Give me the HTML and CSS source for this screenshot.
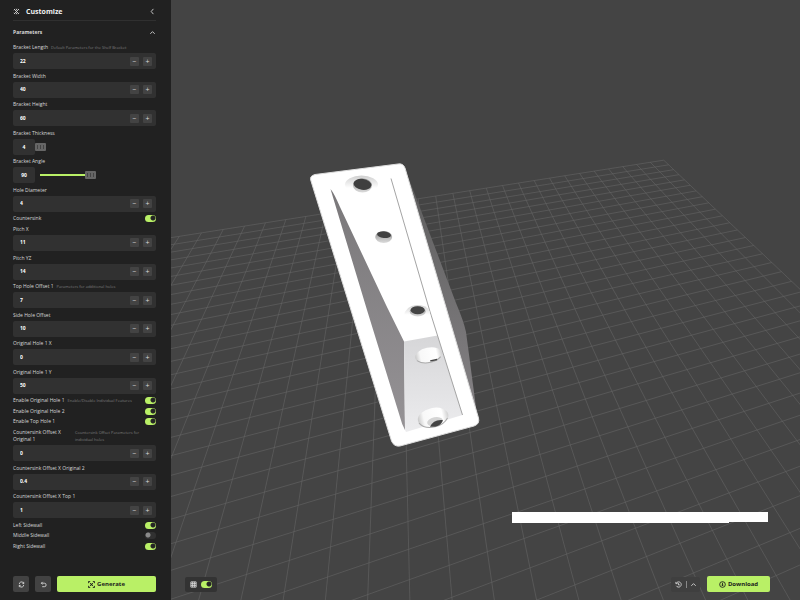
FILE: index.html
```html
<!DOCTYPE html>
<html lang="en">

<head>
    <meta charset="UTF-8" />
    <meta name="viewport" content="width=device-width, initial-scale=1.0" />
    <title>Customize</title>
    <link rel="stylesheet" href="styles.css">
</head>

<body>
    <aside class="sidebar">
        <header class="title-bar">
            <svg class="icon" viewBox="0 0 16 16">
                <path d="M3 3l10 10M13 3L3 13M2 5l3-3M11 2l3 3M2 11l3 3M11 14l3-3M8 2v3M8 11v3" />
            </svg>
            <h1>Customize</h1>
            <button class="plain" aria-label="Collapse panel">
                <svg class="icon" viewBox="0 0 16 16"><path d="M10 2L5 8l5 6" /></svg>
            </button>
        </header>

        <div class="section">
            <h2>Parameters</h2>
            <button class="plain" aria-label="Collapse section">
                <svg class="icon" viewBox="0 0 16 16"><path d="M3 11l5-5 5 5" /></svg>
            </button>
        </div>

        <form class="params" id="params">
            <div class="field">
                <div class="caption"><label for="length">Bracket Length</label><small>Default Parameters for the Shelf Bracket</small></div>
                <div class="number"><input id="length" value="22"><button type="button">−</button><button type="button">+</button></div>
            </div>
            <div class="field">
                <div class="caption"><label for="width">Bracket Width</label></div>
                <div class="number"><input id="width" value="40"><button type="button">−</button><button type="button">+</button></div>
            </div>
            <div class="field">
                <div class="caption"><label for="height">Bracket Height</label></div>
                <div class="number"><input id="height" value="60"><button type="button">−</button><button type="button">+</button></div>
            </div>
            <div class="field">
                <div class="caption"><label for="thickness">Bracket Thickness</label></div>
                <div class="slide">
                    <input class="box" id="thickness" value="4">
                    <input class="range" type="range" min="4" max="20" value="4" style="--fill: 0%" aria-label="Bracket Thickness">
                </div>
            </div>
            <div class="field">
                <div class="caption"><label for="angle">Bracket Angle</label></div>
                <div class="slide">
                    <input class="box" id="angle" value="90">
                    <input class="range" type="range" min="0" max="200" value="90" style="--fill: 45%" aria-label="Bracket Angle">
                </div>
            </div>
            <div class="field">
                <div class="caption"><label for="diameter">Hole Diameter</label></div>
                <div class="number"><input id="diameter" value="4"><button type="button">−</button><button type="button">+</button></div>
            </div>
            <div class="switch">
                <label for="countersink">Countersink</label>
                <input class="toggle" type="checkbox" id="countersink" checked>
            </div>
            <div class="field">
                <div class="caption"><label for="pitch-x">Pitch X</label></div>
                <div class="number"><input id="pitch-x" value="11"><button type="button">−</button><button type="button">+</button></div>
            </div>
            <div class="field">
                <div class="caption"><label for="pitch-yz">Pitch YZ</label></div>
                <div class="number"><input id="pitch-yz" value="14"><button type="button">−</button><button type="button">+</button></div>
            </div>
            <div class="field">
                <div class="caption"><label for="top-offset">Top Hole Offset 1</label><small>Parameters for additional holes</small></div>
                <div class="number"><input id="top-offset" value="7"><button type="button">−</button><button type="button">+</button></div>
            </div>
            <div class="field">
                <div class="caption"><label for="side-offset">Side Hole Offset</label></div>
                <div class="number"><input id="side-offset" value="10"><button type="button">−</button><button type="button">+</button></div>
            </div>
            <div class="field">
                <div class="caption"><label for="hole-x">Original Hole 1 X</label></div>
                <div class="number"><input id="hole-x" value="0"><button type="button">−</button><button type="button">+</button></div>
            </div>
            <div class="field">
                <div class="caption"><label for="hole-y">Original Hole 1 Y</label></div>
                <div class="number"><input id="hole-y" value="50"><button type="button">−</button><button type="button">+</button></div>
            </div>
            <div class="switch">
                <label for="hole-1">Enable Original Hole 1</label><small>Enable/Disable Individual Features</small>
                <input class="toggle" type="checkbox" id="hole-1" checked>
            </div>
            <div class="switch">
                <label for="hole-2">Enable Original Hole 2</label>
                <input class="toggle" type="checkbox" id="hole-2" checked>
            </div>
            <div class="switch">
                <label for="top-hole">Enable Top Hole 1</label>
                <input class="toggle" type="checkbox" id="top-hole" checked>
            </div>
            <div class="field">
                <div class="caption two-line"><label for="cs-1">Countersink Offset X Original 1</label><small>Countersink Offset Parameters for individual holes</small></div>
                <div class="number"><input id="cs-1" value="0"><button type="button">−</button><button type="button">+</button></div>
            </div>
            <div class="field">
                <div class="caption"><label for="cs-2">Countersink Offset X Original 2</label></div>
                <div class="number"><input id="cs-2" value="0.4"><button type="button">−</button><button type="button">+</button></div>
            </div>
            <div class="field">
                <div class="caption"><label for="cs-top">Countersink Offset X Top 1</label></div>
                <div class="number"><input id="cs-top" value="1"><button type="button">−</button><button type="button">+</button></div>
            </div>
            <div class="switch">
                <label for="left">Left Sidewall</label>
                <input class="toggle" type="checkbox" id="left" checked>
            </div>
            <div class="switch">
                <label for="middle">Middle Sidewall</label>
                <input class="toggle" type="checkbox" id="middle">
            </div>
            <div class="switch">
                <label for="right">Right Sidewall</label>
                <input class="toggle" type="checkbox" id="right" checked>
            </div>
        </form>

        <footer class="actions">
            <button class="square" aria-label="Reset">
                <svg class="icon" viewBox="0 0 16 16"><path d="M3 7a5 5 0 0 1 9-3l1 2M13 9a5 5 0 0 1-9 3l-1-2M13 2v4h-3M3 14v-4h3" /></svg>
            </button>
            <button class="square" aria-label="Undo">
                <svg class="icon" viewBox="0 0 16 16"><path d="M6 2L3 5l3 3M3 5h7a4 4 0 0 1 0 8H5" /></svg>
            </button>
            <button class="primary generate">
                <svg class="icon" viewBox="0 0 16 16"><path d="M1 5V1h4M11 1h4v4M15 11v4h-4M5 15H1v-4M4 4l3 3M12 4L9 7M4 12l3-3M12 12L9 9M8 6v4M6 8h4" /></svg>
                Generate
            </button>
        </footer>
    </aside>

    <main class="viewer">
        <svg class="scene" viewBox="171 0 629 600" preserveAspectRatio="xMidYMid slice">
            <defs>
                <linearGradient id="side" x1="0" y1="0" x2="0" y2="1">
                    <stop offset="0" stop-color="#5c5c5c" />
                    <stop offset="1" stop-color="#858285" />
                </linearGradient>
                <linearGradient id="wall" x1="0" y1="0" x2="0" y2="1">
                    <stop offset="0" stop-color="#7a787a" />
                    <stop offset="1" stop-color="#959295" />
                </linearGradient>
                <linearGradient id="floor" x1="0" y1="0" x2="0" y2="1">
                    <stop offset="0" stop-color="#d6d6d8" />
                    <stop offset="1" stop-color="#ececee" />
                </linearGradient>
                <linearGradient id="rim" x1="0" y1="0" x2="0" y2="1">
                    <stop offset="0" stop-color="#8c8c8c" />
                    <stop offset="1" stop-color="#dcdcdc" />
                </linearGradient>
                <linearGradient id="sink" x1="0" y1="0" x2="0" y2="1">
                    <stop offset="0" stop-color="#cfcfcf" />
                    <stop offset="0.7" stop-color="#ffffff" />
                </linearGradient>
                <linearGradient id="bowl" x1="0" y1="0" x2="1" y2="0">
                    <stop offset="0" stop-color="#c8c8c8" />
                    <stop offset="0.2" stop-color="#f8f8f8" />
                    <stop offset="0.8" stop-color="#ffffff" />
                    <stop offset="1" stop-color="#d0d0d0" />
                </linearGradient>
            </defs>

            <path class="grid" id="grid" />

            <!-- bracket body -->
            <path fill="url(#side)" d="M404 167L414 192L456 303Q464 322 466 332L477 415L466 410L400 170Z" />
            <path fill="#fff" stroke="#ddd" stroke-width="1" d="M311 181Q309 176 315 174.500L398 164Q403 163 405 168L478.500 418Q480 424 474 426L400 446Q394 447 391.500 441Z" />
            <path fill="url(#wall)" d="M330.500 189Q334 193 340 207L386.500 306L404 341.500L405 430Q402 425 400 417L367 310Z" />
            <path fill="url(#floor)" d="M404 341.500L437.500 335.500L462.500 415L406 432L405 430Z" />
            <path fill="none" stroke="#a4a4a4" stroke-width="1" d="M391 178.500L429.500 310L462.500 415" />

            <!-- holes -->
            <ellipse cx="361.500" cy="184.500" rx="16.500" ry="9" fill="url(#sink)" />
            <ellipse cx="362.500" cy="185.500" rx="9.500" ry="7" fill="url(#rim)" />
            <ellipse cx="362.500" cy="184.300" rx="9" ry="5.500" fill="#3f3f3f" transform="rotate(8 362 184)" />
            <ellipse cx="383.700" cy="237" rx="8.500" ry="6" fill="url(#rim)" />
            <ellipse cx="384" cy="234.800" rx="7" ry="3.200" fill="#414141" transform="rotate(6 384 235)" />
            <path fill="url(#sink)" d="M404 316Q405 306 417 305Q427 305 429.500 311L431 319Z" />
            <ellipse cx="417.700" cy="311.500" rx="8" ry="5" fill="url(#rim)" />
            <ellipse cx="417.700" cy="310.200" rx="7" ry="4" fill="#444" />
            <g transform="rotate(-12 429 355)">
                <ellipse cx="428.500" cy="355" rx="13.500" ry="7.500" fill="url(#bowl)" />
                <path fill="none" stroke="#aaa" stroke-width="1" d="M416 358Q421 363 429 362.500Q437 362 440 359" />
                <path stroke="#444" stroke-width="1.500" d="M429 361L436 361" />
            </g>
            <g transform="rotate(-12 433 417)">
                <ellipse cx="433" cy="417.500" rx="15.500" ry="9.500" fill="url(#bowl)" />
                <path fill="none" stroke="#aaa" stroke-width="1" d="M418 420Q422 427 433 427Q442 427 447 421" />
                <ellipse cx="434" cy="422" rx="8" ry="4.500" fill="#d4d4d4" />
                <path fill="#444" d="M428 426Q433 419 442 422Q440 427 433 427Z" />
            </g>
        </svg>

        <div class="notice"><span></span></div>

        <div class="view-tools">
            <svg class="icon" viewBox="0 0 16 16"><path d="M2 2h12v12H2zM2 6h12M2 10h12M6 2v12M10 2v12" /></svg>
            <input class="toggle" type="checkbox" aria-label="Show grid" checked>
        </div>

        <div class="export-tools">
            <div class="history">
                <button class="plain" aria-label="History">
                    <svg class="icon" viewBox="0 0 16 16"><path d="M2 2v4h4M3 5a6 6 0 1 1 0 6M8 5v4h3" /></svg>
                </button>
                <button class="plain" aria-label="More versions">
                    <svg class="icon" viewBox="0 0 16 16"><path d="M3 11l5-5 5 5" /></svg>
                </button>
            </div>
            <button class="primary download">
                <svg class="icon" viewBox="0 0 16 16"><circle cx="8" cy="8" r="6.500" /><path d="M8 4v7M5.500 8.500L8 11l2.500-2.500" /></svg>
                Download
            </button>
        </div>
    </main>

    <script src="grid.js"></script>
</body>

</html>
```

FILE: styles.css
```css
* {
    box-sizing: border-box;
}

body {
    margin: 0;
    height: 100vh;
    display: flex;
    overflow: hidden;
    background-color: #444;
    color: #d8d8d8;
    font-family: "Open Sans", "Noto Sans", sans-serif;
    font-size: 5px;
    font-weight: 500;
    line-height: 7px;
}

button,
input {
    margin: 0;
    padding: 0;
    border: none;
    color: inherit;
    font: inherit;
}

button {
    display: flex;
    align-items: center;
    justify-content: center;
    cursor: pointer;
}

h1,
h2 {
    flex: 1;
    margin: 0;
}

.icon {
    width: 7px;
    height: 7px;
    flex: none;
    fill: none;
    stroke: currentColor;
    stroke-width: 2;
}

.plain {
    background: none;
}

/* Sidebar */
.sidebar {
    width: 171px;
    flex: none;
    display: flex;
    flex-direction: column;
    padding: 0 15px 8px 13px;
    background-color: #212121;
}

.title-bar {
    height: 21px;
    display: flex;
    align-items: center;
    gap: 6px;
    padding-top: 3px;
    border-bottom: 1px solid #303030;
}

.title-bar h1 {
    color: #f2f2f2;
    font-size: 7px;
    font-weight: 700;
    line-height: 10px;
}

.section {
    height: 23px;
    display: flex;
    align-items: center;
}

.section h2 {
    font-size: 5px;
    font-weight: 700;
}

.params {
    flex: 1;
    display: flex;
    flex-direction: column;
    justify-content: space-between;
    padding-bottom: 26px;
}

.caption {
    display: flex;
    gap: 3px;
    margin-bottom: 2px;
}

small {
    color: #7c7c7c;
    font-size: 4px;
    font-weight: 400;
}

.two-line label {
    width: 59px;
    padding-right: 8px;
}

.two-line small {
    width: 72px;
}

.number {
    height: 16px;
    display: flex;
    align-items: center;
    gap: 4px;
    padding: 0 4px 0 7px;
    border-radius: 2px;
    background-color: #313131;
}

.number input {
    flex: 1;
    min-width: 0;
    background: none;
    color: #fff;
    font-weight: 700;
}

.number button {
    width: 9px;
    height: 9px;
    border-radius: 1px;
    background-color: #434343;
    font-size: 7px;
}

.slide {
    height: 16px;
    display: flex;
    align-items: center;
}

.box {
    width: 22px;
    height: 16px;
    border-radius: 2px;
    background-color: #313131;
    color: #fff;
    font-weight: 700;
    text-align: center;
}

.range {
    flex: 1;
    min-width: 0;
    height: 8px;
    appearance: none;
    background: linear-gradient(#b9f066, #b9f066) 5px center / var(--fill) 2px no-repeat;
}

.range::-webkit-slider-thumb {
    appearance: none;
    width: 11px;
    height: 8px;
    border-radius: 1px;
    background: repeating-linear-gradient(90deg, #444 0 1px, #666 1px 3px) center / 7px 4px no-repeat #666;
}

.switch {
    height: 7px;
    display: flex;
    align-items: center;
    gap: 3px;
}

.toggle {
    appearance: none;
    width: 11px;
    height: 7px;
    margin-left: auto;
    border-radius: 4px;
    background: radial-gradient(circle at 3px 3px, #8a8a8a 2px, #313131 3px);
}

.toggle:checked {
    background: radial-gradient(circle at 8px 3px, #252525 2px, #b9f066 3px);
}

.actions {
    display: flex;
    gap: 6px;
}

.square {
    width: 16px;
    height: 16px;
    border-radius: 2px;
    background-color: #424242;
}

.primary {
    gap: 2px;
    height: 16px;
    border-radius: 2px;
    background-color: #b9f066;
    color: #1c1c1c;
    font-size: 6px;
    font-weight: 700;
}

.generate {
    flex: 1;
}

/* 3D view */
.viewer {
    position: relative;
    flex: 1;
    min-width: 0;
}

.scene {
    display: block;
    width: 100%;
    height: 100%;
}

.grid {
    fill: none;
    stroke: #646464;
    stroke-width: 0.6;
}

.notice {
    position: absolute;
    right: 32px;
    bottom: 78px;
    width: 256px;
    height: 10px;
    background-color: #fff;
}

.notice span {
    display: block;
    width: 217px;
    height: 11px;
    background-color: #fff;
}

.view-tools,
.export-tools {
    position: absolute;
    bottom: 8px;
    display: flex;
    align-items: center;
}

.view-tools {
    left: 14px;
    width: 32px;
    height: 15px;
    padding: 0 5px;
    border-radius: 2px;
    background-color: #333;
}

.export-tools {
    right: 30px;
    gap: 7px;
}

.history {
    width: 29px;
    height: 15px;
    display: flex;
    align-items: center;
    justify-content: center;
    border-radius: 2px;
    background-color: #3f3f3f;
}

.history button + button {
    margin-left: 4px;
    padding-left: 3px;
    border-left: 1px solid #888;
}

.download {
    width: 63px;
}
```

FILE: grid.js
```js
// Ground grid in perspective. Both line families meet on the horizon.
const horizon = -96;
const nearX = 393.3;
const farX = 2293;
const left = 171;
const bottom = 600;
const span = farX - nearX;
const firstDepth = 6.36;
const firstSlope = 1.0557;

let d = "";

// lines running towards the viewer
for (let i = 0; i < 29; i++) {
    const slope = firstSlope - i * 0.0607;
    const top = span / (firstDepth + slope);
    const end = bottom - horizon;
    d += `M${nearX + slope * top} ${top + horizon}L${nearX + slope * end} ${bottom}`;
}

// lines running across
for (let j = 0; j < 34; j++) {
    const depth = firstDepth - j * 0.1323;
    const edge = span / (depth + firstSlope);
    d += `M${nearX + firstSlope * edge} ${edge + horizon}L${left} ${(farX - left) / depth + horizon}`;
}

document.getElementById("grid").setAttribute("d", d);
```
